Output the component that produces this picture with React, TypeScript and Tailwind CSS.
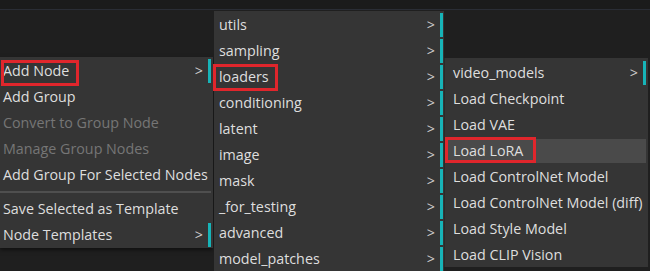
import React from "react";

type Item = { label: string; sub?: boolean; disabled?: boolean; sep?: boolean; hl?: boolean };

const FONT = { fontFamily: '"Open Sans", "Noto Sans", sans-serif' };

function Row({ it, pl }: { it: Item; pl: string }) {
  return (
    <div
      className={`flex items-center h-[24px] ${pl} ${it.sub ? "border-r-[3px] border-[#17b4b8]" : ""} ${
        it.hl ? "bg-[#4a4a4a]" : ""
      } ${it.disabled ? "text-[#767676]" : "text-[#dedede]"}`}
    >
      <span className="flex-1 whitespace-nowrap">{it.label}</span>
      {it.sub && <span className="pr-[5px] text-[#cfcfcf]">&gt;</span>}
    </div>
  );
}

const m1: Item[] = [
  { label: "Add Node", sub: true },
  { label: "Add Group" },
  { label: "Convert to Group Node", disabled: true },
  { label: "Manage Group Nodes", disabled: true },
  { label: "Add Group For Selected Nodes" },
  { label: "", sep: true },
  { label: "Save Selected as Template" },
  { label: "Node Templates", sub: true },
];

const m2: Item[] = [
  "utils",
  "sampling",
  "loaders",
  "conditioning",
  "latent",
  "image",
  "mask",
  "_for_testing",
  "advanced",
  "model_patches",
].map((l) => ({ label: l, sub: true }));

const m3: Item[] = [
  { label: "video_models", sub: true },
  { label: "Load Checkpoint" },
  { label: "Load VAE" },
  { label: "Load LoRA", hl: true },
  { label: "Load ControlNet Model" },
  { label: "Load ControlNet Model (diff)" },
  { label: "Load Style Model" },
  { label: "Load CLIP Vision" },
];

const RED = "border-[3px] border-[#e0262c]";

export default function App() {
  return (
    <div className="relative w-[650px] h-[271px] overflow-hidden bg-[#1f1f1f] text-[14.3px]" style={FONT}>
      <div className="h-[10px] bg-[#1b1b1b] border-b border-[#2a2d35]" />

      {/* menu 1 */}
      <div className="absolute left-0 top-[57px] w-[213px] flex flex-col gap-[2px] bg-[#353535] pt-[2px] pb-[1px] pr-[2px] shadow-[0_2px_4px_rgba(0,0,0,0.5)]">
        {m1.map((it, i) =>
          it.sep ? (
            <div key={i} className="h-[6px] flex items-center">
              <div className="h-[2px] w-full bg-[#4f4f4f]" />
            </div>
          ) : (
            <Row key={i} it={it} pl="pl-[3px]" />
          )
        )}
        <div className={`absolute left-[1px] top-[3px] w-[78px] h-[26px] ${RED}`} />
      </div>

      {/* menu 2 */}
      <div className="absolute left-[214px] top-[11px] w-[230px] flex flex-col gap-[2px] bg-[#353535] pt-[2px] pr-[1px]">
        {m2.map((it, i) => (
          <Row key={i} it={it} pl="pl-[5px]" />
        ))}
        <div className={`absolute left-[-1px] top-[53px] w-[65px] h-[27px] ${RED}`} />
      </div>

      {/* menu 3 */}
      <div className="absolute left-[444px] top-[58px] w-[204px] flex flex-col gap-[2px] bg-[#353535] pt-[3px] pr-[2px] pl-[1px] border-l border-[#2a2a2a]">
        {m3.map((it, i) => (
          <Row key={i} it={it} pl="pl-[7px]" />
        ))}
        <div className={`absolute left-0 top-[79px] w-[91px] h-[26px] ${RED}`} />
      </div>
    </div>
  );
}
